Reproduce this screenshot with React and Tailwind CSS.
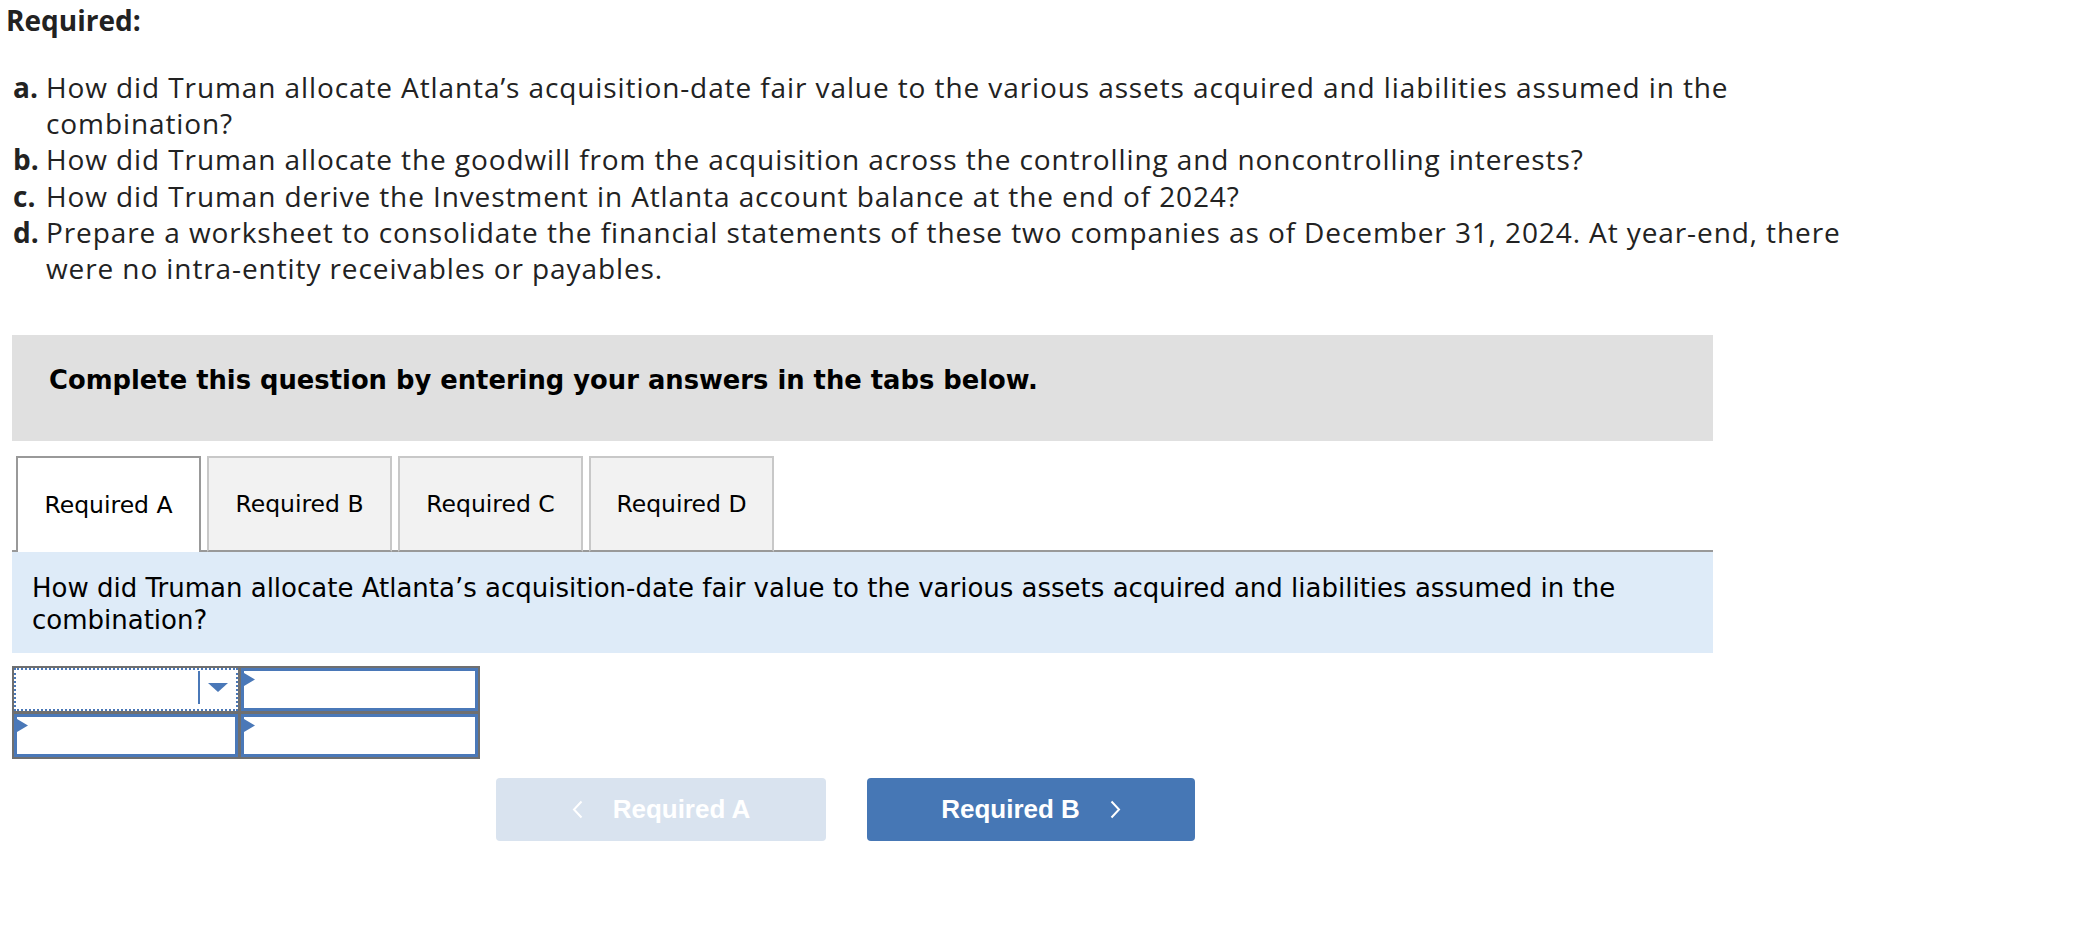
import React from "react";

const questions = [
  {
    label: "a.",
    text: "How did Truman allocate Atlanta\u2019s acquisition-date fair value to the various assets acquired and liabilities assumed in the combination?",
  },
  {
    label: "b.",
    text: "How did Truman allocate the goodwill from the acquisition across the controlling and noncontrolling interests?",
  },
  {
    label: "c.",
    text: "How did Truman derive the Investment in Atlanta account balance at the end of 2024?",
  },
  {
    label: "d.",
    text: "Prepare a worksheet to consolidate the financial statements of these two companies as of December 31, 2024. At year-end, there were no intra-entity receivables or payables.",
  },
];

const tabs = ["Required A", "Required B", "Required C", "Required D"];

// little blue flag in the corner of an answer cell
const Flag = () => (
  <svg className="absolute left-0 top-[2px]" width="11" height="13" viewBox="0 0 11 13">
    <path d="M0 0 L11 6.5 L0 13 Z" fill="#4a78b8" />
  </svg>
);

const Chevron = ({ dir }) => (
  <svg width="11" height="19" viewBox="0 0 11 19" fill="none">
    <path
      d={dir === "left" ? "M9.5 1.5 L2 9.5 L9.5 17.5" : "M1.5 1.5 L9 9.5 L1.5 17.5"}
      stroke="currentColor"
      strokeWidth="2"
    />
  </svg>
);

export default function App() {
  return (
    <div className="w-[2078px] h-[940px] bg-white overflow-hidden text-[#222]">
      {/* question text */}
      <div className="pl-[6px] font-['Open_Sans',sans-serif]">
        <h2 className="h-[40px] leading-[40px] text-[28px] font-bold text-[#222]">Required:</h2>
        <ol className="mt-[29px] w-[1864px] text-[28px] tracking-[0.9px] leading-[36.2px]">
          {questions.map((q) => (
            <li key={q.label} className="flex">
              <span className="w-[40px] shrink-0 pl-[7px] font-bold tracking-normal">{q.label}</span>
              <span>{q.text}</span>
            </li>
          ))}
        </ol>
      </div>

      <div className="ml-[12px] mt-[49px] w-[1701px] font-['DejaVu_Sans',Verdana,sans-serif]">
        <div className="h-[106px] bg-[#e0e0e0] pl-[37px] pt-[29px]">
          <p className="text-[25.8px] leading-[32px] font-bold text-black">
            Complete this question by entering your answers in the tabs below.
          </p>
        </div>

        {/* tabs */}
        <div className="mt-[15px] flex items-end h-[96px]">
          <div className="w-[4px] h-[2px] bg-[#999]" />
          {tabs.map((t, i) =>
            i === 0 ? (
              <div
                key={t}
                className="w-[185px] h-[96px] bg-white border-2 border-b-0 border-[#999] flex items-center justify-center text-[23.5px] text-black"
              >
                {t}
              </div>
            ) : (
              <div key={t} className="flex items-end">
                <div className="w-[6px] h-[2px] bg-[#999]" />
                <div className="w-[185px] h-[96px] bg-[#f2f2f2] border-2 border-[#c8c8c8] border-b-[#999] flex items-center justify-center text-[23.5px] text-black">
                  {t}
                </div>
              </div>
            )
          )}
          <div className="flex-1 h-[2px] bg-[#999]" />
        </div>

        <div className="h-[101px] bg-[#deebf8] pl-[20px] pt-[20px]">
          <p className="text-[26px] leading-[32px] text-black pr-[60px]">
            How did Truman allocate Atlanta&rsquo;s acquisition-date fair value to the various assets acquired and liabilities assumed in the combination?
          </p>
        </div>

        {/* answer grid */}
        <div className="mt-[13px] w-[468px] bg-[#6f6f6f] p-[2px] grid grid-cols-[224px_1fr] gap-[3px]">
          <div className="h-[43px] bg-white border-2 border-dotted border-[#4a78b8] flex">
            <div className="flex-1" />
            <div className="w-[2px] mt-[1px] mb-[5px] bg-[#4a78b8]" />
            <div className="w-[36px] flex items-center justify-center pb-[4px]">
              <svg width="20" height="9" viewBox="0 0 20 9">
                <path d="M0 0 L20 0 L10 9 Z" fill="#4a78b8" />
              </svg>
            </div>
          </div>
          <div className="relative h-[43px] bg-white border-[3px] border-[#4a78b8]">
            <Flag />
          </div>
          <div className="relative h-[43px] bg-white border-[3px] border-[#4a78b8]">
            <Flag />
          </div>
          <div className="relative h-[43px] bg-white border-[3px] border-[#4a78b8]">
            <Flag />
          </div>
        </div>

        {/* prev / next */}
        <div className="mt-[19px] ml-[484px] flex gap-[41px] font-['Liberation_Sans',Arial,sans-serif]">
          <button className="w-[330px] h-[63px] rounded-[4px] bg-[#d9e3ef] text-white text-[26px] font-bold flex items-center justify-center gap-[30px]">
            <Chevron dir="left" />
            <span>Required A</span>
          </button>
          <button className="w-[328px] h-[63px] rounded-[4px] bg-[#4677b5] text-white text-[26px] font-bold flex items-center justify-center gap-[30px]">
            <span>Required B</span>
            <Chevron dir="right" />
          </button>
        </div>
      </div>
    </div>
  );
}
